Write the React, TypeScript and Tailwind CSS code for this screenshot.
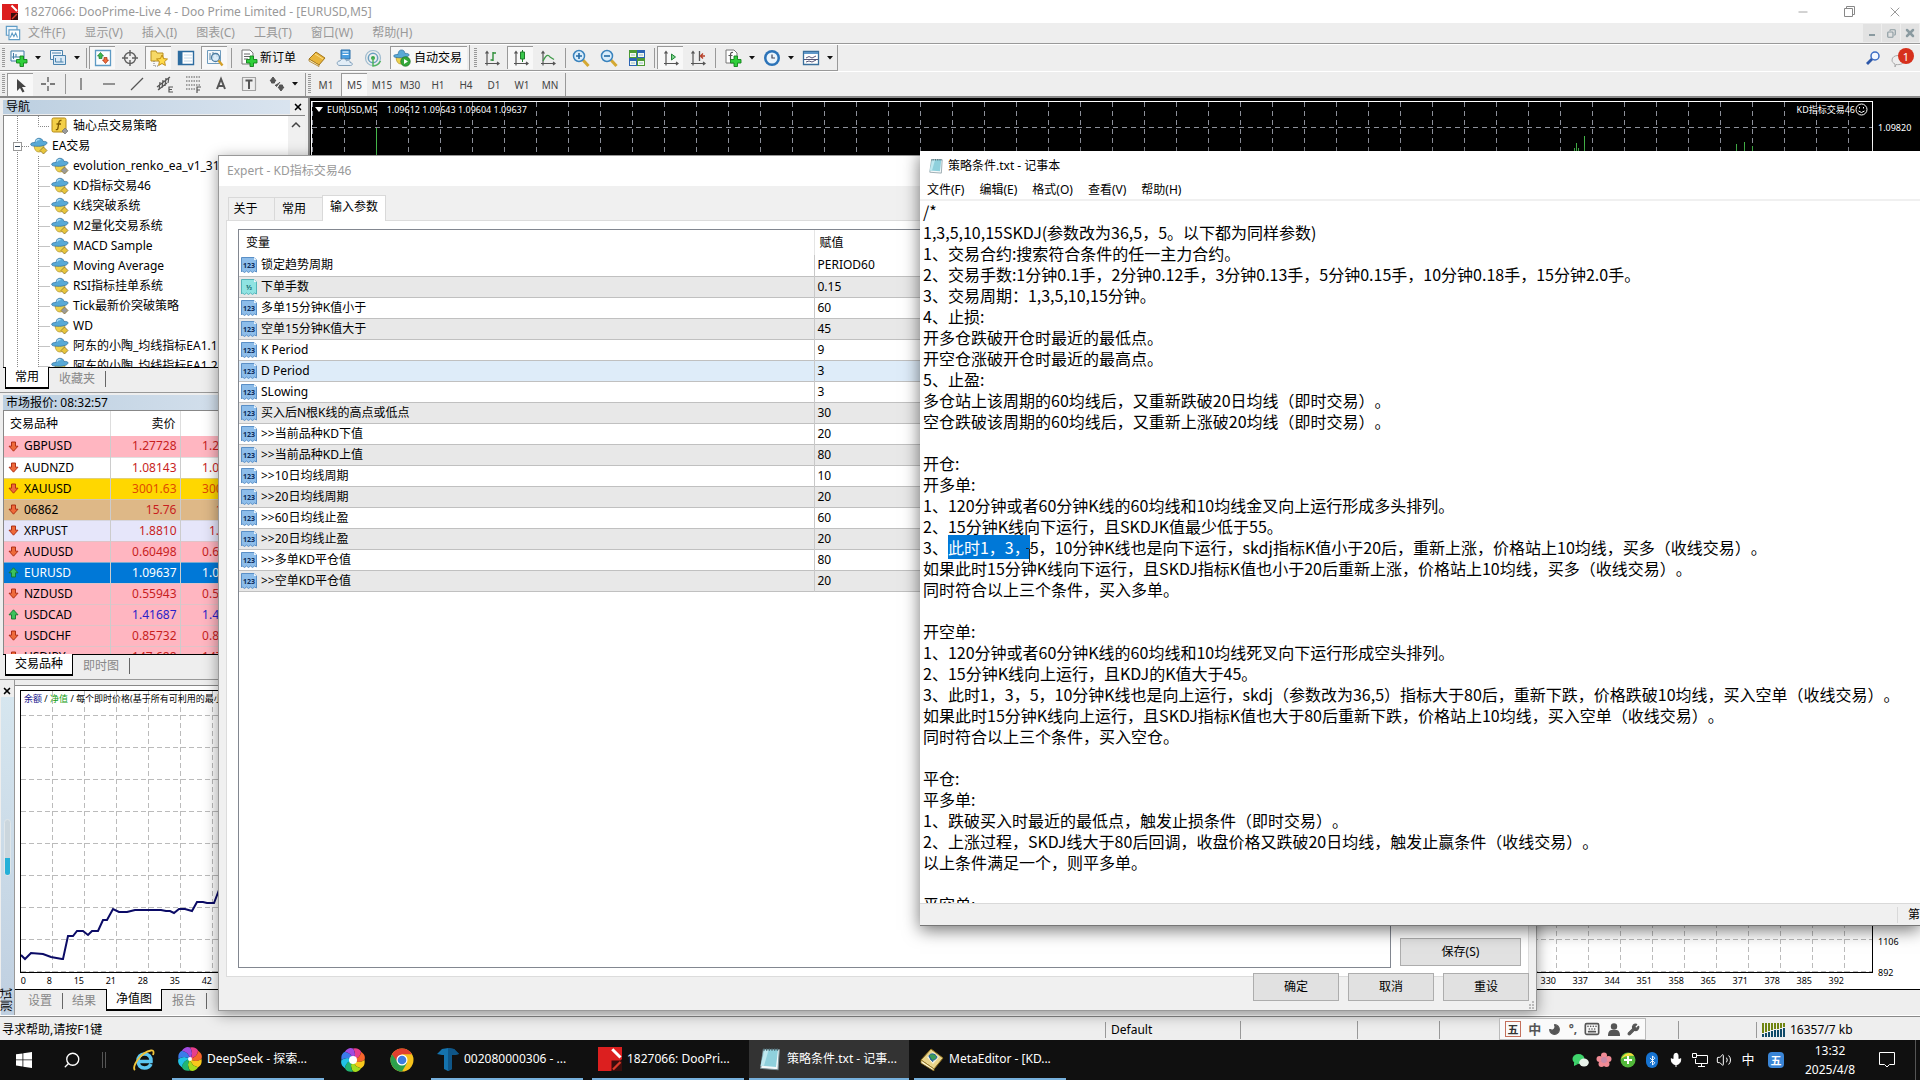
import React, { useEffect, useRef, useState } from 'react';
import { Minus, Copy, X, Search, Moon, Keyboard, User, Wrench, Mic, Volume2, Bluetooth } from 'lucide-react';

type IconProps = { children: React.ReactNode; size?: number };

const Svg: React.FC<IconProps> = ({ children, size = 18 }) => (
  <svg width={size} height={size} viewBox="0 0 18 18" fill="none" className="shrink-0">
    {children}
  </svg>
);

/* ---------- small icons ---------- */

const DooLogo = ({ size = 16 }: { size?: number }) => (
  <svg width={size} height={size} viewBox="0 0 16 16" className="shrink-0">
    <path d="M0 0h16v8l-7 8H0z" fill="#dc1f1f" />
    <path d="M9 9h7v7H9z" fill="#3a0d0d" />
    <path d="M9.500 1.500L15 7" stroke="#fff" strokeWidth="2" />
    <path d="M15 10l-5 5" stroke="#dc3a2a" strokeWidth="1.500" />
  </svg>
);

const HatIcon = ({ tag = '#e8c53a', size = 18 }: { tag?: string; size?: number }) => (
  <Svg size={size}>
    <path d="M4 8.500q.5 6.500 5 6.500t5-6.500z" fill="#ecd24e" stroke="#b08f1c" strokeWidth=".7" />
    <path d="M.7 7.500c0-2 3-2 4.300-2C5.500 2 7 1.300 9 1.300s3.500.7 4 3.200c1.500-.3 4 0 4 1.300 0 2-4 3.500-8.500 3.500C4 9.300.7 9 .7 7.500z" fill="#58a9d6" stroke="#2e6f9c" strokeWidth=".7" />
    <path d="M6 4.500c.5-1.500 2-2 3.500-1.800" stroke="#b6e2f7" strokeWidth="1.200" />
    <path d="M13.500 10l3.500 3.500-3.500 3.500-3.500-3.500z" fill={tag} stroke="#8a7430" strokeWidth=".8" />
  </Svg>
);

const FunctionIcon = () => (
  <Svg>
    <rect x="1" y="1" width="14" height="14" rx="1.500" fill="#f3cf48" stroke="#b58a16" />
    <path d="M10.500 3.500c-2-.5-2.500 1-2.800 3L7 11c-.3 1.500-1 2-2.200 1.500M5.500 7h4.500" stroke="#7a5600" strokeWidth="1.300" />
    <path d="M14 11l3 3-3 3-3-3z" fill="#9a9a9a" stroke="#666" strokeWidth=".6" />
  </Svg>
);

const ParamIcon = ({ fraction }: { fraction?: boolean }) => (
  <svg width="16" height="16" viewBox="0 0 16 16" className="shrink-0">
    <path
      d="M.5.500h12.500l2.500 2.500v12l-2-1-2 1.500-2-1.500-2 1.500-2-1.500-2 1.500-2-1.500-1 1z"
      fill={fraction ? '#8fe3e2' : '#8dbdea'}
      stroke={fraction ? '#55b4ba' : '#5a8fc6'}
    />
    <path d="M13 .500v2.500h2.500z" fill="#eef6fd" />
    <text x="8" y="11" textAnchor="middle" fontSize="7" fontWeight="700" fill={fraction ? '#14696e' : '#0b2c5a'}>
      {fraction ? '½' : '123'}
    </text>
  </svg>
);

const ArrowIcon = ({ up }: { up?: boolean }) => (
  <svg width="11" height="11" viewBox="0 0 11 11" className="shrink-0">
    {up ? (
      <path d="M5.500.8l4.500 5H7.500V10h-4V5.800H1z" fill="#3cc25a" stroke="#14752c" strokeWidth=".9" />
    ) : (
      <path d="M5.500 10.200L1 5.200h2.500V1h4v4.200H10z" fill="#ee6a3a" stroke="#a8260c" strokeWidth=".9" />
    )}
  </svg>
);

const NotepadIcon = ({ size = 16 }: { size?: number }) => (
  <Svg size={size}>
    <path d="M4 2l12 0-1 15-13-1z" fill="#f5f9fa" stroke="#7d9299" strokeWidth=".8" />
    <path d="M4.500 2h10.500l-1.500 13L2 14z" fill="#8fd0dc" />
    <path d="M5 2l3 0-3.500 12-2.500 0z" fill="#bfe8ef" />
    <path d="M4 2h12" stroke="#4c6a72" strokeWidth="1.800" strokeDasharray="1 1" />
  </Svg>
);

const PlusBadge = () => (
  <path d="M10 7h3.500v3.500H17V14h-3.500v3.500H10V14H6.500v-3.500H10z" fill="#2fcf3a" stroke="#12811b" strokeWidth=".9" />
);

const NewChartIcon = () => (
  <Svg>
    <path d="M1 2h13v10H1z" fill="#f4f9fd" stroke="#3f7ba5" />
    <path d="M3.500 4v6M2 8h8M6 5v3" stroke="#3f7ba5" />
    <PlusBadge />
  </Svg>
);

const ProfilesIcon = () => (
  <Svg>
    <path d="M1.500 1.500h12v9h-12z" fill="#eef5fb" stroke="#4a83ad" />
    <path d="M4.500 6.500h12v9h-12z" fill="#dbeaf6" stroke="#4a83ad" />
    <path d="M3 4h9M6.500 9v4h8M12 9v4" stroke="#4a83ad" />
  </Svg>
);

const MdiIcon = () => (
  <Svg size={16}>
    <path d="M1.500 1.500h12v10h-12z" fill="#eef5fb" stroke="#5f9cc6" strokeWidth="1.300" />
    <path d="M4.500 5.500h12v11h-12z" fill="#fff" stroke="#5f9cc6" strokeWidth="1.300" />
    <path d="M6 14l2-5 2 4 2-4 2 5" stroke="#5f9cc6" strokeWidth="1.200" />
  </Svg>
);

const MarketWatchIcon = () => (
  <Svg>
    <path d="M1.500 1.500h15v15h-15z" fill="#fbfdff" stroke="#5d9ac4" strokeWidth="1.300" />
    <path d="M6.500 3.500l3 3.500H8v2.500H5V7H3.500z" fill="#3db851" stroke="#1c7a2c" strokeWidth=".7" />
    <path d="M11.500 14.500l3-3.500H13V8.500h-3V11H8.500z" fill="#ef6b3b" stroke="#a5300f" strokeWidth=".7" />
  </Svg>
);

const DataWindowIcon = () => (
  <Svg>
    <circle cx="9" cy="9" r="5.500" stroke="#606060" strokeWidth="1.400" />
    <path d="M9 1v6M9 11v6M1 9h6M11 9h6" stroke="#606060" strokeWidth="1.400" />
  </Svg>
);

const NavigatorIcon = () => (
  <Svg>
    <path d="M1 2h5l1 2h6v8H1z" fill="#f7d967" stroke="#b98f20" />
    <path d="M4 12v5h4" stroke="#777" strokeDasharray="1 1" />
    <path d="M12 6l1.600 3.600 3.900.4-2.900 2.600.8 3.900-3.400-2-3.400 2 .8-3.900L6.500 10l3.900-.4z" fill="#ffdb4a" stroke="#b98510" strokeWidth=".9" />
  </Svg>
);

const TerminalIcon = () => (
  <Svg>
    <path d="M1.500 2.500h15v13h-15z" fill="#fff" stroke="#2d6ca0" strokeWidth="1.400" />
    <path d="M2 3h3.500v12H2z" fill="#2d6ca0" />
    <path d="M7 6h8M7 9h8M7 12h8" stroke="#c3d8e8" />
  </Svg>
);

const TesterIcon = () => (
  <Svg>
    <path d="M1.500 1.500h13v13h-13z" fill="#f3f8fc" stroke="#6e9bbd" />
    <path d="M4 4v7M7 3v6M11 4v4" stroke="#59809e" />
    <circle cx="9.500" cy="8.500" r="4" fill="#d5e9f8" fillOpacity=".8" stroke="#4c7da3" strokeWidth="1.300" />
    <path d="M12.500 11.500l4 5" stroke="#d4a029" strokeWidth="2.400" />
  </Svg>
);

const NewOrderIcon = () => (
  <Svg>
    <path d="M2 1h8l3 3v11H2z" fill="#fff" stroke="#777" />
    <path d="M4 5h6M4 7.500h6M4 10h4" stroke="#666" />
    <PlusBadge />
  </Svg>
);

const BookIcon = ({ size = 18 }: { size?: number }) => (
  <Svg size={size}>
    <path d="M1 10l7-7 9 6-6 7z" fill="#e8b53c" stroke="#9b6c10" strokeWidth=".9" />
    <path d="M1 10l10 6v1.500L1 12z" fill="#fff1c0" stroke="#9b6c10" strokeWidth=".7" />
    <path d="M7 5l8 5" stroke="#ffe08a" />
  </Svg>
);

const CloudBoxIcon = () => (
  <Svg>
    <path d="M5 1h9v9H5z" fill="#4c9fe0" stroke="#2b6fa8" />
    <path d="M6.500 3h6M6.500 5.500h6" stroke="#fff" />
    <path d="M4 16.500c-4 0-3.500-5 0-4.500 1-3 6-3 6.500 0 2-1.500 4 0 3.500 1.500 3 0 3 3 .5 3z" fill="#e2edf7" stroke="#7898b6" strokeWidth=".9" />
  </Svg>
);

const SignalIcon = () => (
  <Svg>
    <circle cx="9" cy="9" r="7.500" stroke="#9fbccf" strokeWidth="1.200" />
    <circle cx="9" cy="9" r="4.700" stroke="#6a9fc0" strokeWidth="1.500" />
    <circle cx="9" cy="9" r="2" fill="#3aa64b" />
    <path d="M9 9v8c3.500 0 6-2 7.500-5" stroke="#4fb45c" strokeWidth="1.500" />
  </Svg>
);

const AutoTradeIcon = () => (
  <Svg>
    <path d="M3 8.500q.5 6.500 5 6.500t6-6.500z" fill="#ecd24e" stroke="#b08f1c" strokeWidth=".7" />
    <path d="M.7 7c0-1.500 3-1.500 4.300-1.500C5.500 2 6.500 1 8.500 1s3 1 3.500 3.500c1.500-.3 4 0 4 1.300 0 2-3.500 3-7.500 3S.7 8.500.7 7z" fill="#58a9d6" stroke="#2e6f9c" strokeWidth=".7" />
    <circle cx="12.500" cy="12.500" r="4.800" fill="#33a83a" stroke="#196b1f" strokeWidth=".6" />
    <path d="M11 10l4 2.500-4 2.500z" fill="#fff" />
  </Svg>
);

const AxisPath = () => <path d="M4 2.500v14M2 14.500h14M2.500 4.500L4 2.500l1.500 2M14 13l2 1.500-2 1.500" stroke="#555" strokeWidth="1.200" />;

const BarsIcon = () => (
  <Svg>
    <AxisPath />
    <path d="M10 3v9M10 4h3M7.500 11H10" stroke="#2f8f3a" strokeWidth="1.400" />
  </Svg>
);
const CandleIcon = () => (
  <Svg>
    <AxisPath />
    <path d="M10.500 1v12" stroke="#1f7a2b" />
    <path d="M8.500 3h4v7h-4z" fill="#38c74a" stroke="#1f7a2b" />
  </Svg>
);
const LineIcon = () => (
  <Svg>
    <AxisPath />
    <path d="M4 12c3-6 5-7 7-4l4 2.500" stroke="#3f9a49" strokeWidth="1.300" />
  </Svg>
);
const MagnifierIcon = ({ plus }: { plus?: boolean }) => (
  <Svg>
    <path d="M11 11l5.500 6" stroke="#d4a832" strokeWidth="3" />
    <circle cx="7" cy="7" r="5.500" fill="#d9edfb" stroke="#3a83bd" strokeWidth="1.500" />
    <path d={plus ? 'M4 7h6M7 4v6' : 'M4 7h6'} stroke="#2369a5" strokeWidth="1.600" />
  </Svg>
);
const TileIcon = () => (
  <Svg>
    <path d="M1 1h8v8H1zM9 9h8v8H9z" fill="#4c9a34" />
    <path d="M9 1h8v8H9zM1 9h8v8H1z" fill="#2c65b4" />
    <path d="M2 4h6v4H2zM10 4h6v4h-6zM2 12h6v4H2zM10 12h6v4h-6z" fill="#f4f9ee" />
    <path d="M3 6h4M11 6h4M3 14h4M11 14h4" stroke="#98b8c8" />
  </Svg>
);
const AutoScrollIcon = () => (
  <Svg>
    <AxisPath />
    <path d="M9.500 5l4 3-4 3z" fill="#7ed389" stroke="#23873a" />
  </Svg>
);
const ShiftIcon = () => (
  <Svg>
    <AxisPath />
    <path d="M10.500 2v10" stroke="#555" strokeWidth="1.300" />
    <path d="M16 7h-4M14 4.500L11.500 7 14 9.500" stroke="#b8402a" strokeWidth="1.400" />
  </Svg>
);
const IndicatorIcon = () => (
  <Svg>
    <path d="M2 1h8l3 3v10H2z" fill="#fff" stroke="#777" />
    <path d="M9 3.500c-2-.5-2.500.5-2.500 2.500v5M4.500 6.500h4" stroke="#555" strokeWidth="1.200" />
    <PlusBadge />
  </Svg>
);
const ClockIcon = () => (
  <Svg>
    <circle cx="9" cy="9" r="8" fill="#2b73b8" />
    <circle cx="9" cy="9" r="5.500" fill="#eaf4fc" />
    <path d="M9 5.500V9h3" stroke="#445" strokeWidth="1.200" />
  </Svg>
);
const TemplateIcon = () => (
  <Svg>
    <path d="M1.500 2.500h15v13h-15z" fill="#fff" stroke="#3a6f9c" strokeWidth="1.300" />
    <path d="M2 3h14v2H2z" fill="#5f97c8" />
    <path d="M4 9l3-1.500L10 9l4-2M4 13l3-1 3 1 4-2M2 10.500h14" stroke="#557" />
  </Svg>
);

const drawTools: { label: string; icon: React.ReactNode }[] = [
  { label: 'Vertical line', icon: <path d="M9 3v12" /> },
  { label: 'Horizontal line', icon: <path d="M3 9h12" /> },
  { label: 'Trend line', icon: <path d="M3 15L15 3" /> },
  {
    label: 'Channel',
    icon: (
      <>
        <path d="M1 12L14 2M2 15L11 8M4 7l-1 8M7 5l-1 8M10 3L9 11M13 2l-1 6" />
        <path d="M17 12h-4v5h4M13 14.500h3" />
      </>
    ),
  },
  {
    label: 'Fibonacci',
    icon: (
      <>
        <path d="M2 2h14M2 6h14M2 10h14M2 14h9" strokeDasharray="1.500 1" />
        <path d="M17 12h-4v6M13 15h3" />
      </>
    ),
  },
  { label: 'Text', icon: <path d="M5 14L9 4l4 10M6.500 11h5" strokeWidth="2" /> },
  {
    label: 'Label',
    icon: (
      <>
        <path d="M2.500 2.500h13v13h-13z" strokeDasharray="1 1" />
        <path d="M5.500 5.500h7M9 5.500V14" strokeWidth="2" />
      </>
    ),
  },
  {
    label: 'Arrows',
    icon: <path d="M5 2l3 4H6.500v2h-3V6H2zM13 16l-3-4h1.500v-2h3v2H16zM7 10l1.500 1.500L12 7" fill="#555" strokeWidth="1" />,
  },
];

/* ---------- toolbar pieces ---------- */

const ToolButton: React.FC<{ label: string; active?: boolean; children: React.ReactNode }> = ({ label, active, children }) => (
  <button
    type="button"
    aria-label={label}
    className={`mr-[2px] flex h-[23px] w-[26px] shrink-0 items-center justify-center ${
      active ? 'border-l border-t border-[#999] bg-[#f8f8f8]' : ''
    }`}
  >
    {children}
  </button>
);

const Grip = () => <span className="mx-[2px] h-5 w-[3px] shrink-0 bg-[repeating-linear-gradient(#999_0_1px,#eee_1px_2px)]" />;
const Divider = () => <span className="mx-[2px] h-5 w-px shrink-0 bg-[#999]" />;
const Caret = () => (
  <svg width="11" height="4" viewBox="0 0 11 4" className="shrink-0">
    <path d="M0 0h6L3 3.500z" fill="#111" />
  </svg>
);

const menus = ['文件(F)', '显示(V)', '插入(I)', '图表(C)', '工具(T)', '窗口(W)', '帮助(H)'];
const periods = ['M1', 'M5', 'M15', 'M30', 'H1', 'H4', 'D1', 'W1', 'MN'];

const TitleBar = () => (
  <header className="flex h-[23px] shrink-0 items-center bg-white pl-[2px] pr-[2px] text-[#999]">
    <DooLogo />
    <h1 className="ml-[6px] text-xs">1827066: DooPrime-Live 4 - Doo Prime Limited - [EURUSD,M5]</h1>
    <div className="ml-auto flex">
      <button type="button" aria-label="Minimize" className="flex w-[46px] items-center justify-center"><Minus size={14} strokeWidth={1.500} /></button>
      <button type="button" aria-label="Restore" className="flex w-[46px] items-center justify-center">
        <svg width="11" height="11" viewBox="0 0 11 11" fill="none" stroke="#888"><path d="M.5 2.500h8v8h-8zM2.500 2V.500h8v8H9" /></svg>
      </button>
      <button type="button" aria-label="Close" className="flex w-[46px] items-center justify-center"><X size={16} strokeWidth={1.500} /></button>
    </div>
  </header>
);

const MenuBar = () => (
  <nav className="flex h-[21px] shrink-0 items-center border-b border-[#999] pl-[5px] text-xs text-[#999]">
    <MdiIcon />
    <div className="ml-[7px] flex gap-[19px]">
      {menus.map((menu) => (
        <button key={menu} type="button">{menu}</button>
      ))}
    </div>
    <div className="ml-auto flex gap-px pr-px text-[#8a9aa0]">
      <button type="button" aria-label="Minimize chart" className="flex h-[18px] w-[18px] items-center justify-center bg-[#e2e2e2]"><span className="mt-1 h-[2px] w-[6px] bg-[#8a9aa0]" /></button>
      <button type="button" aria-label="Restore chart" className="flex h-[18px] w-[18px] items-center justify-center bg-[#e2e2e2]"><Copy size={9} strokeWidth={3} className="-scale-x-100" /></button>
      <button type="button" aria-label="Close chart" className="flex h-[18px] w-[18px] items-center justify-center bg-[#e2e2e2]"><X size={12} strokeWidth={5} /></button>
    </div>
  </nav>
);

const MainToolbar = () => (
  <div className="flex h-[27px] shrink-0 items-center border-t border-white">
    <div className="flex h-[26px] items-center border-b border-r border-[#999]">
      <Grip />
      <button type="button" aria-label="New chart" className="flex w-[38px] items-center gap-[7px] pl-[3px]"><NewChartIcon /><Caret /></button>
      <button type="button" aria-label="Profiles" className="flex w-[39px] items-center gap-[7px] pl-1"><ProfilesIcon /><Caret /></button>
      <Divider />
      <ToolButton label="Market watch" active><MarketWatchIcon /></ToolButton>
      <ToolButton label="Data window"><DataWindowIcon /></ToolButton>
      <ToolButton label="Navigator" active><NavigatorIcon /></ToolButton>
      <ToolButton label="Terminal"><TerminalIcon /></ToolButton>
      <ToolButton label="Strategy tester" active><TesterIcon /></ToolButton>
      <Divider />
      <button type="button" className="ml-[6px] mr-1 flex w-[60px] items-center gap-[2px] whitespace-nowrap text-xs"><NewOrderIcon />新订单</button>
      <ToolButton label="MetaEditor"><BookIcon /></ToolButton>
      <ToolButton label="VPS"><CloudBoxIcon /></ToolButton>
      <ToolButton label="Signals"><SignalIcon /></ToolButton>
      <button type="button" className="ml-[2px] mr-[2px] flex h-[23px] w-[77px] items-center gap-[3px] border-l border-t border-[#999] bg-[#f8f8f8] pl-[2px] text-xs"><AutoTradeIcon />自动交易</button>
    </div>
    <div className="flex h-[26px] items-center border-b border-r border-[#999] pl-[2px]">
      <Grip />
      <ToolButton label="Bar chart"><BarsIcon /></ToolButton>
      <ToolButton label="Candlesticks" active><CandleIcon /></ToolButton>
      <ToolButton label="Line chart"><LineIcon /></ToolButton>
      <Divider />
      <ToolButton label="Zoom in"><MagnifierIcon plus /></ToolButton>
      <ToolButton label="Zoom out"><MagnifierIcon /></ToolButton>
      <ToolButton label="Tile windows"><TileIcon /></ToolButton>
      <Divider />
      <ToolButton label="Auto scroll" active><AutoScrollIcon /></ToolButton>
      <ToolButton label="Chart shift"><ShiftIcon /></ToolButton>
      <Divider />
      <button type="button" aria-label="Indicators" className="flex w-[39px] items-center gap-[7px] pl-[6px]"><IndicatorIcon /><Caret /></button>
      <button type="button" aria-label="Periods" className="flex w-[39px] items-center gap-[7px] pl-[6px]"><ClockIcon /><Caret /></button>
      <button type="button" aria-label="Templates" className="flex w-[41px] items-center gap-[7px] pl-[6px]"><TemplateIcon /><Caret /></button>
    </div>
    <div className="ml-auto flex items-center gap-[11px] pr-[6px]">
      <button type="button" aria-label="Search">
        <svg width="14" height="14" viewBox="0 0 14 14" fill="none">
          <circle cx="9" cy="5" r="4" fill="#f4f8ff" stroke="#3b6cc4" strokeWidth="1.500" />
          <path d="M6 8l-5 5" stroke="#2c57a8" strokeWidth="2.800" />
        </svg>
      </button>
      <button type="button" aria-label="Notifications" className="relative h-5 w-[23px]">
        <svg width="14" height="14" viewBox="0 0 14 14" className="absolute bottom-0 left-0">
          <path d="M1 6c0-6 12-6 12 0 0 4-4 5-8 4.500L4 13V10C2 9 1 8 1 6z" fill="#eee" stroke="#aaa" />
        </svg>
        <span className="absolute right-0 top-0 flex h-4 w-4 items-center justify-center rounded-full bg-[#d6301c] text-[11px] leading-none text-white">1</span>
      </button>
    </div>
  </div>
);

const DrawToolbar = () => (
  <div className="flex h-[27px] shrink-0 items-center border-b-2 border-[#888] border-t border-t-white">
    <Grip />
    <div className="flex items-center border-r border-[#999] pr-[2px]">
      <ToolButton label="Cursor" active>
        <svg width="18" height="18" viewBox="0 0 18 18"><path d="M5 3v12l3-3 2.500 4.500 2-1L10 11h4z" fill="#444" /></svg>
      </ToolButton>
      <ToolButton label="Crosshair">
        <svg width="18" height="18" viewBox="0 0 18 18"><path d="M9 2v5M9 11v5M2 9h5M11 9h5" stroke="#555" strokeWidth="1.300" /></svg>
      </ToolButton>
      <Divider />
      {drawTools.map((tool) => (
        <ToolButton key={tool.label} label={tool.label}>
          <svg width="18" height="18" viewBox="0 0 18 18" fill="none" stroke="#555" strokeWidth="1.200">{tool.icon}</svg>
        </ToolButton>
      ))}
      <Caret />
    </div>
    <Grip />
    <div className="flex border-r border-[#999]">
      {periods.map((period) => (
        <button
          key={period}
          type="button"
          className={`mr-[2px] h-[23px] w-[26px] pt-px text-[10px] text-[#444] ${period === 'M5' ? 'border-l border-t border-[#999] bg-[#f8f8f8]' : ''}`}
        >
          {period}
        </button>
      ))}
    </div>
  </div>
);

/* ---------- left column ---------- */

const experts = [
  { name: 'evolution_renko_ea_v1_31', off: true },
  { name: 'KD指标交易46' },
  { name: 'K线突破系统' },
  { name: 'M2量化交易系统' },
  { name: 'MACD Sample' },
  { name: 'Moving Average' },
  { name: 'RSI指标挂单系统' },
  { name: 'Tick最新价突破策略', off: true },
  { name: 'WD' },
  { name: '阿东的小陶_均线指标EA1.1' },
  { name: '阿东的小陶_均线指标EA1.2' },
];

const Branch = ({ last }: { last?: boolean }) => (
  <svg width="47" height="20" className="shrink-0">
    <path d={last ? 'M13.500 0v20M34.500 0v10.500H46' : 'M13.500 0v20M34.500 0v20M34.500 10.500H46'} stroke="#888" strokeDasharray="1 1" fill="none" />
  </svg>
);

const PaneTabs = ({ tabs }: { tabs: string[] }) => (
  <div className="flex h-[25px] shrink-0 items-start border-t border-black pl-[2px] text-xs">
    {tabs.map((tab, i) => (
      <button
        key={tab}
        type="button"
        className={i === 0 ? '-mt-px h-[22px] border-x border-b-2 border-black bg-white px-[9px]' : 'mt-[3px] h-4 border-r border-[#666] px-[10px] leading-4 text-[#888]'}
      >
        {tab}
      </button>
    ))}
  </div>
);

const Navigator = () => (
  <section className="flex h-[295px] shrink-0 flex-col border-b border-[#999] pl-[3px] pr-[3px] pt-[2px]">
    <div className="flex h-[14px] items-center justify-between bg-gradient-to-r from-[#bccfe0] to-[#dbe5f0] pl-[3px]">
      <h2 className="text-xs leading-none">导航</h2>
      <button type="button" aria-label="Close navigator" className="flex h-[14px] w-[15px] items-center justify-center bg-[#eee] text-black"><X size={10} strokeWidth={4} /></button>
    </div>
    <div className="mt-px flex min-h-0 flex-1 justify-between overflow-hidden border-l border-t border-[#888] bg-white text-xs">
      <ul>
        <li className="flex h-5 items-center whitespace-nowrap"><Branch last /><FunctionIcon /><span className="ml-1">轴心点交易策略</span></li>
        <li className="flex h-5 items-center whitespace-nowrap">
          <svg width="26" height="20" className="shrink-0">
            <path d="M13.500 0v20M18 10.500h8" stroke="#888" strokeDasharray="1 1" />
            <rect x="9.500" y="6.500" width="8" height="8" fill="#fff" stroke="#999" />
            <path d="M11 10.500h5" stroke="#345" />
          </svg>
          <HatIcon />
          <span className="ml-1">EA交易</span>
        </li>
        {experts.map((expert) => (
          <li key={expert.name} className="flex h-5 items-center whitespace-nowrap">
            <Branch />
            <HatIcon tag={expert.off ? '#9a9a9a' : undefined} />
            <span className="ml-1">{expert.name}</span>
          </li>
        ))}
      </ul>
      <div className="w-[17px] bg-[#f0f0f0] pt-[5px]">
        <svg width="17" height="8" viewBox="0 0 17 8"><path d="M4 6l4-4 4 4" stroke="#444" strokeWidth="1.500" fill="none" /></svg>
      </div>
    </div>
    <PaneTabs tabs={['常用', '收藏夹']} />
  </section>
);

type Quote = { symbol: string; bid: string; ask: string; row: string; text: string; up?: boolean };

const quotes: Quote[] = [
  { symbol: 'GBPUSD', bid: '1.27728', ask: '1.27745', row: 'bg-[#ffb6c1]', text: 'text-[#c81e1e]' },
  { symbol: 'AUDNZD', bid: '1.08143', ask: '1.08171', row: 'bg-white', text: 'text-[#c81e1e]' },
  { symbol: 'XAUUSD', bid: '3001.63', ask: '3001.88', row: 'bg-[#ffd700]', text: 'text-[#e04a00]' },
  { symbol: '06862', bid: '15.76', ask: '15.78', row: 'bg-[#deb887]', text: 'text-[#c81e1e]' },
  { symbol: 'XRPUST', bid: '1.8810', ask: '1.8840', row: 'bg-[#e6e6fa]', text: 'text-[#c81e1e]' },
  { symbol: 'AUDUSD', bid: '0.60498', ask: '0.60512', row: 'bg-[#ffb6c1]', text: 'text-[#c81e1e]' },
  { symbol: 'EURUSD', bid: '1.09637', ask: '1.09651', row: 'bg-[#0078d7] text-white', text: 'text-white', up: true },
  { symbol: 'NZDUSD', bid: '0.55943', ask: '0.55966', row: 'bg-[#ffb6c1]', text: 'text-[#c81e1e]' },
  { symbol: 'USDCAD', bid: '1.41687', ask: '1.41709', row: 'bg-[#ffb6c1]', text: 'text-[#2a1ec8]', up: true },
  { symbol: 'USDCHF', bid: '0.85732', ask: '0.85755', row: 'bg-[#ffb6c1]', text: 'text-[#c81e1e]' },
  { symbol: 'USDJPY', bid: '147.688', ask: '147.702', row: 'bg-[#ffb6c1]', text: 'text-[#c81e1e]' },
];

const MarketWatch = () => (
  <section className="flex min-h-0 flex-1 flex-col border-b border-[#999] pl-[3px] pr-[3px] pt-[2px]">
    <div className="flex h-[15px] shrink-0 items-center bg-gradient-to-r from-[#bccfe0] to-[#dbe5f0] pl-[3px]">
      <h2 className="text-xs leading-none">市场报价: 08:32:57</h2>
    </div>
    <div className="min-h-0 flex-1 overflow-hidden border-l border-t border-[#888] bg-white">
      <table className="w-full table-fixed text-xs">
        <thead>
          <tr className="h-[25px]">
            <th className="w-[106px] border-r border-[#ddd] pl-[6px] text-left font-normal">交易品种</th>
            <th className="w-[70px] border-r border-[#ddd] pr-[4px] text-right font-normal">卖价</th>
            <th className="w-[70px] border-r border-[#ddd] pr-[4px] text-right font-normal">买价</th>
            <th />
          </tr>
        </thead>
        <tbody>
          {quotes.map((q) => (
            <tr key={q.symbol} className={`h-[21px] border-b border-[#ccc]/60 ${q.row}`}>
              <td className="border-r border-[#ccc] p-0"><span className="flex items-center gap-[5px] pl-1"><ArrowIcon up={q.up} />{q.symbol}</span></td>
              <td className={`border-r border-[#ccc] py-0 pr-[3px] text-right ${q.text}`}>{q.bid}</td>
              <td className={`border-r border-[#ccc] py-0 pr-[3px] text-right ${q.text}`}>{q.ask}</td>
              <td />
            </tr>
          ))}
        </tbody>
      </table>
    </div>
    <PaneTabs tabs={['交易品种', '即时图']} />
  </section>
);

/* ---------- charts ---------- */

const PriceChart = () => (
  <section className="flex min-w-0 flex-1 border-l-2 border-[#888] bg-black pl-px pt-[3px] text-white">
    <div className="relative min-w-0 flex-1 overflow-hidden border border-b-0 border-white">
      <svg width="100%" height="100%" className="absolute inset-0">
        <defs>
          <pattern id="grid" width="32" height="600" patternUnits="userSpaceOnUse">
            <path d="M.5 0v600" stroke="#8c8f99" strokeDasharray="5 4" />
          </pattern>
        </defs>
        <rect width="100%" height="100%" fill="url(#grid)" />
        <path d="M0 25.500H1600" stroke="#8c8f99" strokeDasharray="5 4" />
        <path d="M64.500 26v40M1264.500 41v20M1262.500 46v10M1266.500 46v10M1272.500 34v30M1424.500 42v10M1432.500 40v12M1440.500 44v8" stroke="#45b84a" />
      </svg>
      <div className="relative flex items-center pl-[3px] pr-1 text-[9px] leading-[15px]">
        <svg width="8" height="5" viewBox="0 0 8 5"><path d="M0 0h8L4 5z" fill="#fff" /></svg>
        <span className="ml-[4px]">EURUSD,M5</span>
        <span className="ml-[9px]">1.09612 1.09643 1.09604 1.09637</span>
        <span className="ml-auto">KD指标交易46</span>
        <svg width="13" height="13" viewBox="0 0 13 13" fill="none" stroke="#fff">
          <circle cx="6.500" cy="6.500" r="5.500" />
          <path d="M4.500 4v1.500M8.500 4v1.500M3.500 8q3 3 6 0" />
        </svg>
      </div>
    </div>
    <div className="w-[47px] pl-[5px] pt-[19px] text-[9px] leading-[15px]">1.09820</div>
  </section>
);

// the axis steps by slightly under seven trades per 32px column
const axisLabels = Array.from({ length: 57 }, (_, i) => Math.floor((i + 1) * 6.864 + 1.3));
const priceLabels = ['2818', '2604', '2390', '2176', '1962', '1748', '1534', '1320', '1106', '892'];

const TesterPane = () => (
  <section className="flex h-[336px] shrink-0 border-b border-white">
    <div className="flex w-[15px] shrink-0 flex-col items-center border-r border-[#999] pt-1">
      <button type="button" aria-label="Close tester" className="flex h-[13px] items-center"><X size={10} strokeWidth={4} /></button>
      <div className="flex w-[13px] flex-1 flex-col items-center justify-between bg-gradient-to-b from-[#d6e6ef] to-[#bfcfe0] pb-[3px]">
        <span className="mt-[122px] flex h-[57px] w-[7px] flex-col justify-end overflow-hidden rounded-full border border-[#dfe6ea] bg-[#cbd6dd]">
          <span className="h-[17px] bg-[#25b0d8]" />
        </span>
        <h2 className="rotate-180 text-xs leading-none [text-orientation:sideways] [writing-mode:vertical-rl]">测试</h2>
      </div>
    </div>
    <div className="flex min-w-0 flex-1 flex-col pt-[5px]">
      <div className="flex min-h-0 flex-1 border-t border-[#888] bg-white pl-[5px] pt-1">
        <div className="flex min-w-0 flex-1 flex-col">
          <div className="relative h-[283px] shrink-0 overflow-hidden border border-black">
            <svg width="100%" height="100%" className="absolute inset-0">
              <defs>
                <pattern id="testerGrid" width="32" height="32" patternUnits="userSpaceOnUse">
                  <path d="M31.500 0v32M0 24.500h32" stroke="#bbb" strokeDasharray="5 3" />
                </pattern>
              </defs>
              <rect width="100%" height="100%" fill="url(#testerGrid)" />
              <path
                d="M0 264l4 4 6-6 12 1 8 3 11 2h1l5-23h5l4-5h6l5 4 4-4h6l5-11h4l6-11 6 3h8l8-2h26l5 1h4l4 2 5-4h6l7 2 5-9h6l4 1h7l5-13h8"
                stroke="#0b0b66"
                strokeWidth="2"
                fill="none"
              />
            </svg>
            <p className="relative pl-[3px] text-[9px] leading-4">
              <span className="text-[#14148c]">余额</span> / <span className="text-[#12a012]">净值</span> / 每个即时价格(基于所有可利用的最小时间周期来模拟每一个即时价格)
            </p>
          </div>
          <div className="flex overflow-hidden text-[9px] leading-[15px]">
            <span className="-mr-[6px] w-[6px] shrink-0 text-right">0</span>
            {axisLabels.map((label) => (
              <span key={label} className="w-8 shrink-0 text-right">{label}</span>
            ))}
          </div>
        </div>
        <div className="flex w-[47px] flex-col justify-between pb-[9px] pl-[5px] text-[9px] leading-[15px]">
          {priceLabels.map((label) => (
            <span key={label}>{label}</span>
          ))}
        </div>
      </div>
      <div className="flex h-[26px] shrink-0 items-start border-t border-black text-xs text-[#888]">
        <button type="button" className="mt-[3px] h-4 border-r border-[#666] pl-[13px] pr-[10px] leading-4">设置</button>
        <button type="button" className="mt-[3px] h-4 pl-[9px] pr-[10px] leading-4">结果</button>
        <button type="button" className="-mt-px h-[22px] border-x border-b-2 border-black bg-white px-[9px] text-black">净值图</button>
        <button type="button" className="mt-[3px] h-4 border-r border-[#666] px-[10px] leading-4">报告</button>
        <button type="button" className="mt-[3px] h-4 px-[10px] leading-4">日志</button>
      </div>
    </div>
  </section>
);

const StatusBar = () => (
  <footer className="flex h-6 shrink-0 items-center border-t border-[#888] pt-[2px] text-xs">
    <span className="flex-1 pl-[2px]">寻求帮助,请按F1键</span>
    <span className="w-[135px] border-l border-[#999] pl-[5px]">Default</span>
    <span className="h-[18px] w-[117px] border-l border-[#999]" />
    <span className="h-[18px] w-[82px] border-l border-[#999]" />
    <span className="h-[18px] w-[239px] border-l border-[#999]" />
    <span className="h-[18px] w-[78px] border-l border-[#999]" />
    <span className="flex w-[164px] items-center gap-1 border-l border-[#999] pl-[5px]">
      <svg width="24" height="14" viewBox="0 0 24 14">
        <path d="M1 0v10M4 0v9M7 0v8M10 0v7M13 0v6M16 0v6M19 0v5M22 0v4" stroke="#6f8410" strokeWidth="2" />
        <path d="M1 11v3M4 10v4M7 9v5M10 8v6M13 7v7M16 7v7M19 6v8M22 5v9" stroke="#0f4a68" strokeWidth="2" />
      </svg>
      16357/7 kb
    </span>
  </footer>
);

/* ---------- expert properties dialog ---------- */

const params: [string, string][] = [
  ['锁定趋势周期', 'PERIOD60'],
  ['下单手数', '0.15'],
  ['多单15分钟K值小于', '60'],
  ['空单15分钟K值大于', '45'],
  ['K Period', '9'],
  ['D Period', '3'],
  ['SLowing', '3'],
  ['买入后N根K线的高点或低点', '30'],
  ['>>当前品种KD下值', '20'],
  ['>>当前品种KD上值', '80'],
  ['>>10日均线周期', '10'],
  ['>>20日均线周期', '20'],
  ['>>60日均线止盈', '60'],
  ['>>20日均线止盈', '20'],
  ['>>多单KD平仓值', '80'],
  ['>>空单KD平仓值', '20'],
];

const DialogButton: React.FC<{ children: React.ReactNode; wide?: boolean }> = ({ children, wide }) => (
  <button type="button" className={`h-7 border border-[#adadad] bg-[#e1e1e1] text-xs ${wide ? 'mb-[2px] w-[121px]' : 'w-[86px]'}`}>
    {children}
  </button>
);

const ExpertDialog = () => {
  const [selected, setSelected] = useState('D Period');

  return (
    <section className="absolute left-[218px] top-[155px] flex h-[856px] w-[1319px] flex-col border border-[#999] bg-[#f0f0f0] text-xs shadow-[0_3px_14px_rgba(0,0,0,0.4)]">
      <h2 className="flex h-[30px] shrink-0 items-center bg-white pl-2 text-[#999]">Expert - KD指标交易46</h2>
      <div className="flex h-[34px] shrink-0 items-end pl-[9px]">
        <button type="button" className="h-[23px] w-[47px] border border-b-0 border-[#d9d9d9] pr-3">关于</button>
        <button type="button" className="h-[23px] w-[47px] border border-x-0 border-b-0 border-[#d9d9d9] pr-[9px]">常用</button>
        <button type="button" className="relative -mb-px h-[26px] w-[64px] border border-b-0 border-[#d9d9d9] bg-white pb-[3px]">输入参数</button>
      </div>
      <div className="mx-[7px] flex min-h-0 flex-1 items-end gap-[9px] border border-[#dcdcdc] bg-white pb-[8px] pl-[11px] pr-[7px] pt-[8px]">
        <div className="min-w-0 flex-1 self-stretch border border-[#828790] bg-white">
          <table className="w-full table-fixed">
            <thead>
              <tr className="h-[25px]">
                <th className="w-[575px] border-r border-[#e5e5e5] pl-[7px] text-left font-normal">变量</th>
                <th className="pl-[5px] text-left font-normal">赋值</th>
              </tr>
            </thead>
            <tbody>
              {params.map(([name, value], i) => (
                <tr
                  key={name}
                  onClick={() => setSelected(name)}
                  className={`h-[21px] border-b border-[#c0c0c0] ${name === selected ? 'bg-[#deecf9]' : i % 2 ? 'bg-[#e8e8e8]' : 'bg-white'}`}
                >
                  <td className="border-r border-[#c8c8c8] p-0">
                    <span className="flex items-center gap-1 pl-[2px]"><ParamIcon fraction={i === 1} />{name}</span>
                  </td>
                  <td className="py-0 pl-[3px]">{value}</td>
                </tr>
              ))}
            </tbody>
          </table>
        </div>
        <DialogButton wide>保存(S)</DialogButton>
      </div>
      <div className="relative -mt-1 flex h-[37px] shrink-0 justify-end gap-[9px] pr-[7px]">
        <DialogButton>确定</DialogButton>
        <DialogButton>取消</DialogButton>
        <DialogButton>重设</DialogButton>
        <svg width="6" height="8" viewBox="0 0 6 8" className="absolute bottom-px right-[2px]">
          <path d="M4 0h2v2H4zM4 3h2v2H4zM4 6h2v2H4zM1 3h2v2H1zM1 6h2v2H1z" fill="#bbb" />
        </svg>
      </div>
    </section>
  );
};

/* ---------- notepad ---------- */

const strategyText = `/*
1,3,5,10,15SKDJ(参数改为36,5，5。以下都为同样参数)
1、交易合约:搜索符合条件的任一主力合约。
2、交易手数:1分钟0.1手，2分钟0.12手，3分钟0.13手，5分钟0.15手，10分钟0.18手，15分钟2.0手。
3、交易周期：1,3,5,10,15分钟。
4、止损:
开多仓跌破开仓时最近的最低点。
开空仓涨破开仓时最近的最高点。
5、止盈:
多仓站上该周期的60均线后，又重新跌破20日均线（即时交易）。
空仓跌破该周期的60均线后，又重新上涨破20均线（即时交易）。

开仓:
开多单:
1、120分钟或者60分钟K线的60均线和10均线金叉向上运行形成多头排列。
2、15分钟K线向下运行，且SKDJK值最少低于55。
3、此时1，3，5，10分钟K线也是向下运行，skdj指标K值小于20后，重新上涨，价格站上10均线，买多（收线交易）。
如果此时15分钟K线向下运行，且SKDJ指标K值也小于20后重新上涨，价格站上10均线，买多（收线交易）。
同时符合以上三个条件，买入多单。

开空单:
1、120分钟或者60分钟K线的60均线和10均线死叉向下运行形成空头排列。
2、15分钟K线向上运行，且KDJ的K值大于45。
3、此时1，3，5，10分钟K线也是向上运行，skdj（参数改为36,5）指标大于80后，重新下跌，价格跌破10均线，买入空单（收线交易）。
如果此时15分钟K线向上运行，且SKDJ指标K值也大于80后重新下跌，价格站上10均线，买入空单（收线交易）。
同时符合以上三个条件，买入空仓。

平仓:
平多单:
1、跌破买入时最近的最低点，触发止损条件（即时交易）。
2、上涨过程，SKDJ线大于80后回调，收盘价格又跌破20日均线，触发止赢条件（收线交易）。
以上条件满足一个，则平多单。

平空单:`;

const Notepad = () => {
  const editor = useRef<HTMLTextAreaElement>(null);

  useEffect(() => {
    const start = strategyText.indexOf('此时1，3，');
    editor.current?.focus({ preventScroll: true });
    editor.current?.setSelectionRange(start, start + '此时1，3，'.length);
  }, []);

  return (
    <section className="absolute left-[920px] right-0 top-[151px] flex h-[775px] flex-col overflow-hidden border-b border-[#777] bg-white text-xs shadow-[0_4px_16px_rgba(0,0,0,0.55)]">
      <h2 className="flex h-[30px] shrink-0 items-center gap-1 pl-2"><NotepadIcon />策略条件.txt - 记事本</h2>
      <nav className="flex h-5 shrink-0 items-center gap-[15px] border-b-2 border-[#f0f0f0] pl-[7px]">
        {['文件(F)', '编辑(E)', '格式(O)', '查看(V)', '帮助(H)'].map((menu) => (
          <button key={menu} type="button">{menu}</button>
        ))}
      </nav>
      <textarea
        ref={editor}
        aria-label="策略条件.txt"
        wrap="off"
        spellCheck={false}
        defaultValue={strategyText}
        className="min-h-0 flex-1 resize-none overflow-hidden bg-white pl-[3px] font-['Noto_Sans_CJK_SC',sans-serif] text-base leading-[21px] outline-none [text-spacing-trim:space-all] selection:bg-[#0078d7] selection:text-white"
      />
      <div className="flex h-[22px] shrink-0 items-center justify-end border-t border-[#d9d9d9] bg-[#f0f0f0]">
        <span className="w-[23px] overflow-hidden whitespace-nowrap border-l border-[#d9d9d9] pl-[10px]">第 17 行</span>
      </div>
      <svg width="9" height="18" viewBox="0 0 9 18" className="absolute left-[105px] top-[396px]">
        <path d="M1 1.500h2.500l1 1 1-1H8M4.500 2v13M1 16.500h2.500l1-1 1 1H8" stroke="#222" fill="none" />
      </svg>
    </section>
  );
};

/* ---------- input method bar and taskbar ---------- */

const ImeBar = () => (
  <div className="absolute bottom-10 right-[274px] flex h-[22px] w-[147px] items-center justify-between border border-[#bbb] bg-[#fafafa] px-[5px] text-[#555]">
    <span className="flex h-4 w-4 items-center justify-center border border-[#c4705c] text-[11px] font-bold leading-none text-[#333]">五</span>
    <span className="text-[13px] font-bold leading-none">中</span>
    <Moon size={13} fill="#555" className="-scale-x-100" />
    <span className="text-xs font-bold leading-none">°,</span>
    <Keyboard size={16} strokeWidth={2.500} />
    <svg width="12" height="13" viewBox="0 0 12 13" fill="#555"><circle cx="6" cy="3.500" r="3.200" /><path d="M0 13c0-5 2-6 4-6h4c2 0 4 1 4 6z" /></svg>
    <Wrench size={13} fill="#555" />
  </div>
);

const petals = ['#e83e8c', '#f7642c', '#f8c81c', '#a5dc1e', '#22b573', '#22c3e6', '#3b7bea', '#a24be0'];

const PinwheelIcon = ({ hole }: { hole: number }) => (
  <svg width="24" height="24" viewBox="0 0 24 24" className="shrink-0">
    {petals.map((color, i) => (
      <path key={color} d="M12 12Q16 6 12 .5Q18-.5 20.130 3.870Q19.070 10.590 12 12" fill={color} transform={`rotate(${i * 45} 12 12)`} />
    ))}
    <circle cx="12" cy="12" r={hole} fill="#fff" />
  </svg>
);

const ChromeIcon = () => (
  <svg width="24" height="24" viewBox="0 0 24 24">
    <circle cx="12" cy="12" r="11.500" fill="#f6c21c" />
    <path d="M12 12L2.040 6.250A11.500 11.500 0 0 0 12 23.500L17 15z" fill="#2da04c" />
    <path d="M12 .5A11.500 11.500 0 0 1 21.960 6.250H12L7 13 2.040 6.250A11.500 11.500 0 0 1 12 .5z" fill="#e0402f" />
    <circle cx="12" cy="12" r="5.500" fill="#fff" />
    <circle cx="12" cy="12" r="4.300" fill="#3e7de0" />
  </svg>
);

const IeIcon = () => (
  <svg width="24" height="24" viewBox="0 0 24 24" fill="none">
    <path d="M19 16c-1.500 3-4 4-6.500 4C8.500 20 6 17 6 13s2.500-7 6.500-7 7 3 6.500 7.500H7" stroke="#5cc6f2" strokeWidth="3.600" />
    <path d="M3 22C-1 19 9 4 19 2.500c3-.5 3 2 2 4.500" stroke="#f0c43a" strokeWidth="1.800" />
  </svg>
);

const TIcon = () => (
  <svg width="22" height="24" viewBox="0 0 22 24" className="shrink-0">
    <path d="M0 7l5-5 6-1 6 1 5 5-5 1h-2v14l-4 2-4-2V8H5z" fill="#1473ae" />
    <path d="M11 1v23l4-2V8h2l5-1-5-5z" fill="#0f5688" />
  </svg>
);

const MetaEditorIcon = () => (
  <svg width="24" height="24" viewBox="0 0 24 24" className="shrink-0">
    <path d="M1 13L11 2l12 9-9 11z" fill="#e9d48c" stroke="#8b6d1c" />
    <path d="M1 13l13 9v2L1 16z" fill="#fff6cf" stroke="#8b6d1c" strokeWidth=".8" />
    <path d="M7 10l6-5 6 5-6 7z" fill="#f5f1dc" />
    <path d="M9 9c1-3 6-3 8 1-1 3-5 4-6 3zM9 9l4 6" fill="#3f9c57" stroke="#1f5d99" />
  </svg>
);

const TaskItem: React.FC<{ icon: React.ReactNode; title: string; active?: boolean }> = ({ icon, title, active }) => (
  <button
    type="button"
    className={`flex h-10 items-center gap-[5px] whitespace-nowrap border-b-2 border-[#76b0dc] pl-[6px] ${active ? 'ml-[5px] w-40 bg-[#333] pl-[9px]' : 'w-[152px]'}`}
  >
    {icon}
    {title}
  </button>
);

const Taskbar = () => (
  <div className="flex h-10 shrink-0 items-center bg-[#101010] text-xs text-white">
    <button type="button" aria-label="Start" className="flex w-12 justify-center">
      <svg width="16" height="16" viewBox="0 0 16 16"><path d="M0 2.300l6.500-.9v6.100H0zM7.300 1.300L16 0v7.500H7.300zM0 8.300h6.500v6.200L0 13.600zM7.300 8.300H16V16l-8.700-1.300z" fill="#fff" /></svg>
    </button>
    <button type="button" aria-label="Search" className="flex w-12 justify-center"><Search size={18} strokeWidth={1.800} className="-scale-x-100" /></button>
    <span className="ml-[6px] mr-[26px] h-4 w-1 border-x border-[#555]" />
    <button type="button" aria-label="Internet Explorer" className="mr-[16px]"><IeIcon /></button>
    <TaskItem icon={<PinwheelIcon hole={2} />} title="DeepSeek - 探索..." />
    <button type="button" aria-label="Browser" className="ml-[17px]"><PinwheelIcon hole={4} /></button>
    <button type="button" aria-label="Chrome" className="ml-[25px] mr-[17px]"><ChromeIcon /></button>
    <TaskItem icon={<TIcon />} title="002080000306 - ..." />
    <span className="w-[9px]" />
    <TaskItem icon={<DooLogo size={24} />} title="1827066: DooPri..." />
    <TaskItem icon={<NotepadIcon size={24} />} title="策略条件.txt - 记事..." active />
    <span className="w-[5px]" />
    <TaskItem icon={<MetaEditorIcon />} title="MetaEditor - [KD..." />
    <div className="ml-auto flex items-center">
      <span className="flex w-6 justify-center">
        <svg width="17" height="15" viewBox="0 0 17 15"><ellipse cx="6.500" cy="6" rx="6" ry="5" fill="#3fd46c" /><path d="M2 9v4l4-2z" fill="#3fd46c" /><ellipse cx="12" cy="9.500" rx="4.800" ry="4" fill="#e8f2ea" /></svg>
      </span>
      <span className="flex w-6 justify-center">
        <svg width="16" height="16" viewBox="0 0 16 16" fill="#f08a94">
          <circle cx="8" cy="3.500" r="3" /><circle cx="12.500" cy="7" r="3" /><circle cx="10.500" cy="12" r="3" /><circle cx="5.500" cy="12" r="3" /><circle cx="3.500" cy="7" r="3" />
          <circle cx="8" cy="8" r="3" fill="#c98aa8" />
        </svg>
      </span>
      <span className="flex w-6 justify-center">
        <svg width="16" height="16" viewBox="0 0 16 16"><circle cx="8" cy="8" r="7.500" fill="#52b83a" /><path d="M1 7c3-7 11-8 13-3-5-1-10 0-13 3z" fill="#f6dd3c" /><path d="M8 4v8M4 8h8" stroke="#fff" strokeWidth="2" /></svg>
      </span>
      <span className="flex w-6 justify-center"><span className="flex h-4 w-3 items-center justify-center rounded-full bg-[#1673d1]"><Bluetooth size={11} /></span></span>
      <span className="flex w-6 justify-center"><Mic size={16} fill="#fff" strokeWidth={1.500} /></span>
      <span className="flex w-6 justify-center">
        <svg width="16" height="14" viewBox="0 0 16 14" fill="none" stroke="#fff"><path d="M5 2.500h10.500v8H3.500V6M.5.5h4v4h-4zM9.500 10.500v3M6 13.500h7" /></svg>
      </span>
      <span className="flex w-6 justify-center"><Volume2 size={16} strokeWidth={1.500} /></span>
      <span className="w-6 text-center text-[13px]">中</span>
      <span className="ml-2 flex h-4 w-4 items-center justify-center rounded-sm bg-[#3a85d6] text-[11px] font-bold leading-none">五</span>
      <time className="ml-[14px] w-[64px] text-center leading-[19px]">13:32<br />2025/4/8</time>
      <button type="button" aria-label="Notifications" className="ml-[17px]">
        <svg width="16" height="16" viewBox="0 0 16 16" fill="none" stroke="#fff"><path d="M.5.5h15v12h-5L8 15l-2.500-2.500h-5z" /></svg>
      </button>
      <span className="ml-5 mr-1 h-10 w-px bg-[#555]" />
    </div>
  </div>
);

const App: React.FC = () => (
  <div className="relative flex h-screen flex-col overflow-hidden bg-[#eee] font-['Noto_Sans','Noto_Sans_CJK_SC',sans-serif] leading-4 text-black">
    <TitleBar />
    <MenuBar />
    <MainToolbar />
    <DrawToolbar />
    <main className="flex min-h-0 flex-1 flex-col">
      <div className="flex min-h-0 flex-1">
        <div className="flex w-[308px] shrink-0 flex-col">
          <Navigator />
          <MarketWatch />
        </div>
        <PriceChart />
      </div>
      <TesterPane />
    </main>
    <StatusBar />
    <Taskbar />
    <ExpertDialog />
    <Notepad />
    <ImeBar />
  </div>
);

export default App;
